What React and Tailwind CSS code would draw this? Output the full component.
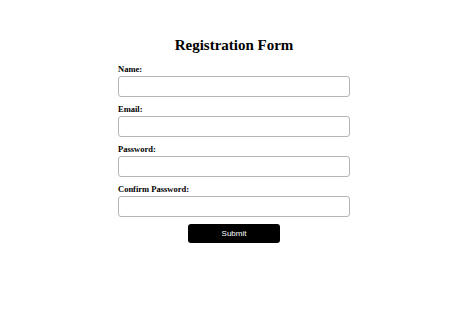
export default function App() {
  const fields = [
    { label: "Name:", type: "text" },
    { label: "Email:", type: "email" },
    { label: "Password:", type: "password" },
    { label: "Confirm Password:", type: "password" },
  ];
  return (
    <div className="w-[474px] h-[311px] bg-white flex justify-center pr-[6px]" style={{ fontFamily: '"Liberation Serif", "Times New Roman", serif' }}>
      <div className="w-[232px] pt-[36px] flex flex-col">
        <h2 className="text-[15px] font-bold text-center leading-[18px] text-black mb-[10px]">Registration Form</h2>
        {fields.map((f) => (
          <div key={f.label} className="flex flex-col mb-[7px]">
            <label className="text-[8.5px] font-bold leading-[10px] text-black mb-[2px]">{f.label}</label>
            <input type={f.type} className="h-[21px] w-full border border-[#b5b5b5] rounded-[3px] bg-white" />
          </div>
        ))}
        <div className="flex justify-center">
          <button className="w-[92px] h-[19px] bg-black text-white rounded-[3px] text-[8px] leading-[19px]" style={{ fontFamily: '"Liberation Sans", Arial, sans-serif' }}>
            Submit
          </button>
        </div>
      </div>
    </div>
  );
}
